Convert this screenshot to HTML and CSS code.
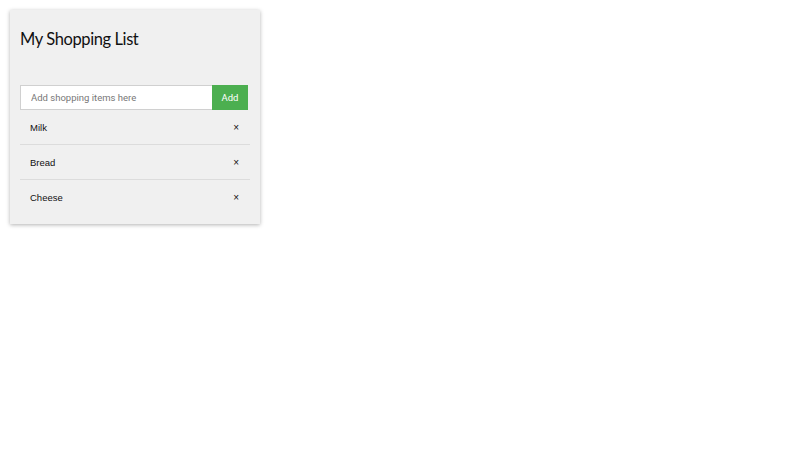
FILE: index.html
```html
<!DOCTYPE html>
<html>
<head>
<meta charset="utf-8">
<link rel="stylesheet" href="styles.css">
</head>
<body>
<div class="card">
  <h1 class="title">My Shopping List</h1>
  <form class="add-row">
    <input class="add-input" type="text" placeholder="Add shopping items here">
    <button class="add-btn" type="button">Add</button>
  </form>
  <ul class="items">
    <li class="item"><span>Milk</span><span class="remove">×</span></li>
    <li class="item"><span>Bread</span><span class="remove">×</span></li>
    <li class="item"><span>Cheese</span><span class="remove">×</span></li>
  </ul>
</div>
</body>
</html>
```
FILE: styles.css
```css
html, body {
  margin: 0;
  padding: 0;
  background: #ffffff;
}
body {
  font-family: "Liberation Sans", Arial, sans-serif;
  font-size: 9.5px;
  color: #111;
}
.card {
  margin: 10px;
  width: 230px;
  padding: 10px;
  background: #f0f0f0;
  box-shadow: 0 1px 4px rgba(0, 0, 0, 0.3);
}
.title {
  font-family: Lato, "Open Sans", sans-serif;
  font-weight: 400;
  font-size: 16.5px;
  letter-spacing: -0.4px;
  line-height: 24px;
  margin: 7px 0 34px 0;
  color: #111;
}
.add-row {
  display: flex;
  width: 228px;
  height: 25px;
  margin: 0;
}
.add-input {
  flex: 1;
  box-sizing: border-box;
  height: 25px;
  border: 1px solid #d0d0d0;
  border-right: none;
  background: #fff;
  padding: 0 10px 0 10px;
  font-family: Roboto, "Liberation Sans", sans-serif;
  font-size: 9.5px;
  outline: none;
  min-width: 0;
}
.add-input::placeholder {
  color: #777;
}
.add-btn {
  width: 36px;
  height: 25px;
  border: none;
  background: #4caf50;
  color: #fff;
  font-family: Roboto, "Liberation Sans", sans-serif;
  font-size: 9.5px;
  padding: 0;
}
.items {
  list-style: none;
  margin: 0;
  padding: 0;
}
.item {
  display: flex;
  justify-content: space-between;
  align-items: center;
  height: 34px;
  padding: 0 11px 0 10px;
  border-bottom: 1px solid #dcdcdc;
}
.item:last-child {
  border-bottom: none;
}
.remove {
  font-size: 10px;
}
```
